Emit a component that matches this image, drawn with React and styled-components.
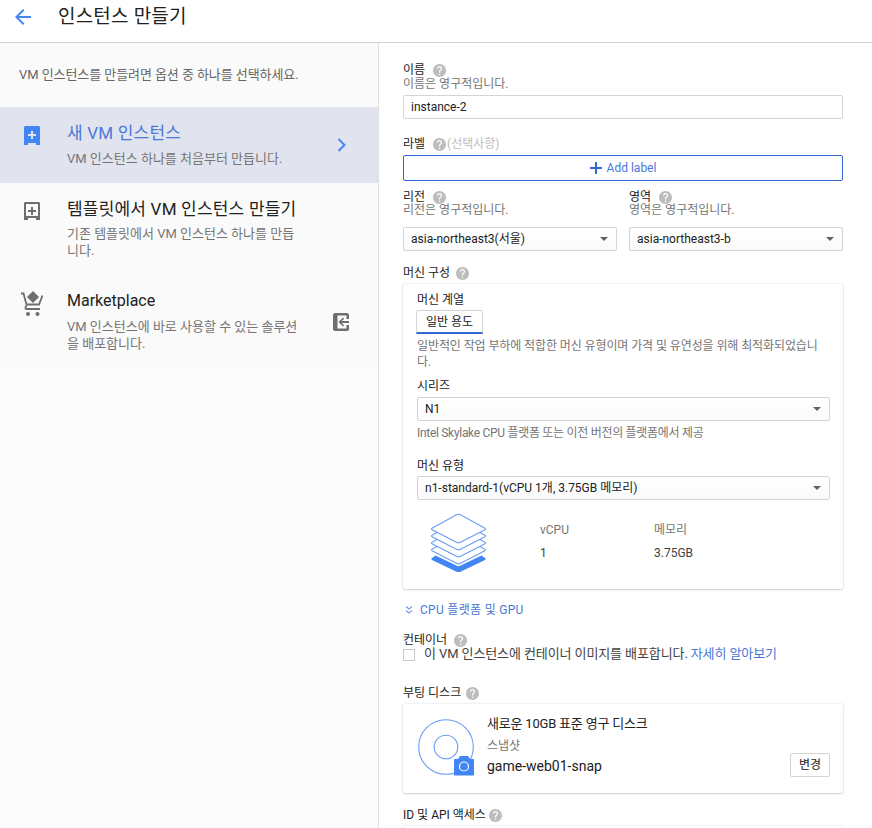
import React from 'react';
import styled, { createGlobalStyle } from 'styled-components';

const Global = createGlobalStyle`
  html, body { margin: 0; padding: 0; background: #fff; }
  body { font-family: Roboto, "Noto Sans CJK KR", sans-serif; color: #212121; height: 828px; overflow: hidden; }
  * { box-sizing: border-box; }
`;

const Page = styled.div`width: 872px; height: 828px; overflow: hidden; display: flex; flex-direction: column;`;
const Header = styled.header`flex: none; height: 43px; display: flex; align-items: center; border-bottom: 1px solid #d2d2d2; padding: 0 0 9px 11px;`;
const BackIcon = styled.svg`width: 24px; height: 24px; fill: #4285f4; margin-right: 23px;`;
const Title = styled.h1`margin: 0; font-size: 19px; letter-spacing: .2px; font-weight: 400; color: #212121; line-height: 24px;`;
const Body = styled.div`flex: 1; display: flex; min-height: 0;`;

const Side = styled.aside`flex: none; width: 379px; background: #fcfcfc; border-right: 1px solid #e0e0e0;`;
const SideInner = styled.div`background: #fafafa;`;
const Intro = styled.p`margin: 0; height: 64px; padding: 24px 0 0 19px; font-size: 13px; letter-spacing: -.07px; line-height: 16px; color: #666;`;
const Row = styled.div`
  display: grid; grid-template-columns: 67px 233px 1fr;
  padding: 16px 0 16px; background: ${p => (p.$active ? '#e1e4ee' : 'transparent')};
`;
const RowIcon = styled.div`display: flex; justify-content: center; margin-left: -4px; color: ${p => (p.$active ? '#4285f4' : '#6e6e6e')};`;
const RowText = styled.div``;
const RowTitle = styled.div`font-size: ${p => p.$size}px; letter-spacing: ${p => p.$ls}px; line-height: 20px; color: ${p => (p.$active ? '#4a78d6' : '#212121')}; white-space: nowrap; margin-bottom: ${p => p.$gap}px;`;
const RowDesc = styled.div`font-size: 13px; line-height: 17px; color: #757575;`;
const RowEnd = styled.div`display: flex; align-items: center; justify-content: center; padding-left: 5px; color: ${p => (p.$blue ? '#4285f4' : '#6e6e6e')};`;

const Main = styled.main`flex: 1; padding: 20px 29px 0 24px; min-width: 0;`;
const Label = styled.div`display: flex; align-items: center; font-size: 12px; line-height: 14px; color: #212121; margin-top: ${p => p.$mt || 0}px;`;
const Help = styled.svg`width: 13px; height: 13px; fill: #bdbdbd; margin-left: ${p => p.$ml ?? 8}px; flex: none;`;
const Optional = styled.span`color: #bdbdbd; margin-left: 1px;`;
const Hint = styled.div`font-size: 12px; line-height: 16px; color: #757575; letter-spacing: ${p => p.$ls || 0}px; margin-top: ${p => p.$mt || 0}px;`;
const Field = styled.div`
  height: 24px; border: 1px solid #d4d4d4; border-radius: 2px; background: #fff; font-size: 12px; line-height: 22px;
  padding: 0 7px; color: #212121; margin-top: ${p => p.$mt || 0}px;
`;
const Select = styled(Field)`
  display: flex; align-items: center; justify-content: space-between; padding-right: 7px;
  background: linear-gradient(#ffffff, #fafafa);
`;
const Caret = styled.span`width: 0; height: 0; border-left: 4px solid transparent; border-right: 4px solid transparent; border-top: 4px solid #616161; margin-right: 1px;`;
const AddLabel = styled.button`
  display: flex; align-items: center; justify-content: center; width: 100%; height: 26px; margin-top: 4px; padding: 0;
  border: 1px solid #3367d6; border-radius: 2px; background: #fff; color: #4a78d6; font: 12px/24px Roboto, "Noto Sans CJK KR", sans-serif;
`;
const Plus = styled.svg`width: 16px; height: 16px; fill: #3367d6; margin: 0 3px 0 -2px;`;
const Columns = styled.div`display: grid; grid-template-columns: 214px 214px; column-gap: 12px; margin-top: 9px;`;
const Card = styled.section`
  background: #fff; border-radius: 2px; box-shadow: 0 0 2px rgba(0,0,0,.18), 0 1px 2px rgba(0,0,0,.14);
  margin-top: ${p => p.$mt || 0}px; height: ${p => p.$h}px; padding: ${p => p.$p};
  ${p => p.$row ? 'display: flex;' : ''}
`;
const Chip = styled.div`
  width: 67px; height: 24px; margin: 3px 0 0 -1px; border: 1px solid #d4d4d4; border-bottom: 2px solid #3367d6; border-radius: 2px 2px 0 0;
  font-size: 12px; line-height: 22px; text-align: center; color: #212121;
`;
const Specs = styled.div`display: flex; padding-top: 13px;`;
const Stack = styled.svg`width: 60px; height: 62px; margin-left: 13px; flex: none;`;
const Spec = styled.div`width: ${p => p.$w}px; margin-left: ${p => p.$ml || 0}px; font-size: 12px; padding-top: 9px;`;
const SpecKey = styled.div`line-height: 16px; color: #757575;`;
const SpecVal = styled.div`line-height: 16px; color: #424242; margin-top: 7px;`;
const More = styled.div`display: flex; align-items: center; margin-top: 13px; height: 16px; color: #4a78d6; font-size: 12px; letter-spacing: .3px; line-height: 16px;`;
const Chevrons = styled.svg`width: 12px; height: 12px; margin-right: 5px; fill: none; stroke: #7a9be0; stroke-width: 1.2;`;
const CheckRow = styled.div`display: flex; align-items: center; font-size: 13px; letter-spacing: -.1px; line-height: 16px; color: #424242; margin-top: -1px;`;
const Box = styled.span`width: 12px; height: 12px; border: 1px solid #c8c8c8; margin-right: 9px; flex: none; margin-top: 2px;`;
const LinkText = styled.span`color: #4a78d6; margin-left: 3px;`;
const DiskText = styled.div`flex: 1;`;
const Disk = styled.svg`width: 58px; height: 58px; flex: none; margin-right: 11px; margin-top: 15px;`;
const DiskTitle = styled.div`font-size: 13px; letter-spacing: -.2px; line-height: 16px; color: #212121; margin-top: 12px;`;
const DiskSub = styled.div`font-size: 12px; line-height: 16px; color: #757575; margin-top: 6px;`;
const DiskName = styled.div`font-size: 14px; line-height: 16px; color: #212121; margin-top: 4px;`;
const DiskBottom = styled.div`display: flex; justify-content: space-between; align-items: flex-start;`;
const Change = styled.button`
  width: 40px; height: 24px; margin-top: -1px; padding: 0; border: 1px solid #d4d4d4; border-radius: 2px; background: #fff;
  color: #212121; font: 12px/22px Roboto, "Noto Sans CJK KR", sans-serif;
`;
const ExitSvg = styled.svg`width: 16px; height: 18px; margin-left: -2px;`;

const HelpIcon = ({ ml }) => (
  <Help $ml={ml} viewBox="2 2 20 20"><path d="M12 2C6.48 2 2 6.48 2 12s4.48 10 10 10 10-4.48 10-10S17.52 2 12 2zm1 17h-2v-2h2v2zm2.07-7.75l-.9.92C13.45 12.9 13 13.5 13 15h-2v-.5c0-1.1.45-2.1 1.17-2.83l1.24-1.26c.37-.36.59-.86.59-1.41 0-1.1-.9-2-2-2s-2 .9-2 2H8c0-2.21 1.79-4 4-4s4 1.79 4 4c0 .88-.36 1.68-.93 2.25z"/></Help>
);

const VmIcon = ({ filled }) => (
  <svg width="24" height="24" viewBox="0 0 24 24">
    {filled ? (
      <path fill="currentColor" d="M5.500 3h13c.8 0 1.500.7 1.500 1.500V22h-4v-2H8v2H4V4.500C4 3.700 4.700 3 5.500 3z" />
    ) : (
      <path fill="currentColor" fillRule="evenodd" d="M5.500 3h13c.8 0 1.500.7 1.500 1.500V21h-4v-2H8v2H4V4.500C4 3.700 4.700 3 5.500 3zM6 5v12h12V5z" />
    )}
    <path fill={filled ? '#e1e4ee' : 'currentColor'} d="M11 8h2v3h3v2h-3v3h-2v-3H8v-2h3z" />
  </svg>
);

const CartIcon = () => (
  <svg width="24" height="26" viewBox="0 0 24 26" fill="none">
    <path d="M1 2.500h2.500l3 11" stroke="currentColor" strokeWidth="1.800" />
    <path d="M6.500 14l-1 2.500c-.3.800.2 1.500 1 1.500H20" stroke="currentColor" strokeWidth="1.800" />
    <path d="M6.500 13.500H19L22.500 4.500" stroke="currentColor" strokeWidth="1.800" />
    <path fill="currentColor" d="M13 0l6 6-6 6-6-6z" />
    <circle cx="8" cy="23" r="2" fill="currentColor" />
    <circle cx="17.500" cy="23" r="2" fill="currentColor" />
  </svg>
);

const ExitIcon = () => (
  <ExitSvg viewBox="0 0 16 18">
    <path fill="currentColor" d="M2 0h12c1 0 2 1 2 2v4h-2.500V2.500h-9v13h9V12H16v4c0 1-1 2-2 2H2c-1 0-2-1-2-2V2C0 1 1 0 2 0z" />
    <path fill="currentColor" d="M10 4.500l1.200 1.200-2.500 2.400H16v1.800H8.700l2.500 2.400L10 13.500 5.500 9z" />
  </ExitSvg>
);

const layer = y => `M26.500 ${y + .8}L2.500 ${y + 14}q-2 1 0 2L26.500 ${y + 28.200}q2 1 4 0L54.500 ${y + 16}q2-1 0-2L30.500 ${y + .8}q-2-1-4 0z`;

const LayersIcon = () => (
  <Stack viewBox="0 0 60 62">
    <path d="M5.500 42.500L28.500 53.500L51.500 42.500L55 45q1.500 1 0 2L31 58.500q-2.500 1-5 0L2 47q-1.500-1 0-2z" fill="#4285f4" />
    {[22, 15, 8, 1].map(y => (
      <path key={y} d={layer(y)} fill="#fff" stroke="#6a9cf5" strokeWidth="1.100" />
    ))}
  </Stack>
);

const DiskIcon = () => (
  <Disk viewBox="0 0 58 58">
    <circle cx="28" cy="28" r="27.300" fill="none" stroke="#6a9cf5" strokeWidth="1.100" />
    <circle cx="28" cy="28" r="11.800" fill="none" stroke="#6a9cf5" strokeWidth="1.100" />
    <path fill="#4285f4" d="M36 41c0-.6.400-1 1-1h3l2-3h8l2 3h3c.6 0 1 .4 1 1v14.500c0 .6-.4 1-1 1H37c-.6 0-1-.4-1-1z" />
    <circle cx="46" cy="47.500" r="4.500" fill="none" stroke="#fff" strokeWidth="1.200" />
  </Disk>
);

const Options = [
  { title: '새 VM 인스턴스', desc: 'VM 인스턴스 하나를 처음부터 만듭니다.', active: true, size: 17, ls: 0.2, gap: 7 },
  { title: '템플릿에서 VM 인스턴스 만들기', desc: '기존 템플릿에서 VM 인스턴스 하나를 만듭니다.', size: 17, ls: 0.2, gap: 6 },
  { title: 'Marketplace', desc: 'VM 인스턴스에 바로 사용할 수 있는 솔루션을 배포합니다.', cart: true, exit: true, size: 16, ls: 0, gap: 7 },
];

export default function App() {
  return (
    <Page>
      <Global />
      <Header>
        <BackIcon viewBox="0 0 24 24"><path d="M20 11H7.830l5.590-5.590L12 4l-8 8 8 8 1.410-1.410L7.830 13H20v-2z" /></BackIcon>
        <Title>인스턴스 만들기</Title>
      </Header>
      <Body>
        <Side>
          <SideInner>
            <Intro>VM 인스턴스를 만들려면 옵션 중 하나를 선택하세요.</Intro>
            {Options.map(o => (
              <Row key={o.title} $active={o.active}>
                <RowIcon $active={o.active}>
                  {o.cart ? <CartIcon /> : <VmIcon filled={o.active} />}
                </RowIcon>
                <RowText>
                  <RowTitle $active={o.active} $size={o.size} $ls={o.ls} $gap={o.gap}>{o.title}</RowTitle>
                  <RowDesc>{o.desc}</RowDesc>
                </RowText>
                <RowEnd $blue={o.active}>
                  {o.active && (
                    <svg width="12" height="16" viewBox="0 0 12 16" fill="none"><path d="M2.500 2l6 6-6 6" stroke="currentColor" strokeWidth="2" /></svg>
                  )}
                  {o.exit && <ExitIcon />}
                </RowEnd>
              </Row>
            ))}
          </SideInner>
        </Side>
        <Main>
          <Label>이름 <HelpIcon /></Label>
          <Hint $mt={-1}>이름은 영구적입니다.</Hint>
          <Field $mt={3}>instance-2</Field>
          <Label $mt={18}>라벨 <HelpIcon /><Optional>(선택사항)</Optional></Label>
          <AddLabel><Plus viewBox="0 0 16 16"><path d="M7 2h2v5h5v2H9v5H7V9H2V7h5z" /></Plus>Add label</AddLabel>
          <Columns>
            <div>
              <Label>리전 <HelpIcon /></Label>
              <Hint $mt={-2}>리전은 영구적입니다.</Hint>
              <Select $mt={9}>asia-northeast3(서울)<Caret /></Select>
            </div>
            <div>
              <Label>영역 <HelpIcon /></Label>
              <Hint $mt={-2}>영역은 영구적입니다.</Hint>
              <Select $mt={9}>asia-northeast3-b<Caret /></Select>
            </div>
          </Columns>
          <Label $mt={15}>머신 구성 <HelpIcon ml={6} /></Label>
          <Card $mt={4} $h={305} $p="9px 13px 0 14px">
            <Label>머신 계열</Label>
            <Chip>일반 용도</Chip>
            <Hint $mt={4} $ls={-0.1}>일반적인 작업 부하에 적합한 머신 유형이며 가격 및 유연성을 위해 최적화되었습니다.</Hint>
            <Label $mt={9}>시리즈</Label>
            <Select $mt={4}>N1<Caret /></Select>
            <Hint $mt={4} $ls={-0.3}>Intel Skylake CPU 플랫폼 또는 이전 버전의 플랫폼에서 제공</Hint>
            <Label $mt={18}>머신 유형</Label>
            <Select $mt={3}>n1-standard-1(vCPU 1개, 3.75GB 메모리)<Caret /></Select>
            <Specs>
              <LayersIcon />
              <Spec $w={114} $ml={50}><SpecKey>vCPU</SpecKey><SpecVal>1</SpecVal></Spec>
              <Spec $w={100}><SpecKey>메모리</SpecKey><SpecVal>3.75GB</SpecVal></Spec>
            </Specs>
          </Card>
          <More>
            <Chevrons viewBox="0 0 12 12"><path d="M3 2.500l3 2.500 3-2.500M3 6.500l3 2.500 3-2.500" /></Chevrons>
            CPU 플랫폼 및 GPU
          </More>
          <Label $mt={15}>컨테이너 <HelpIcon ml={7} /></Label>
          <CheckRow>
            <Box />이 VM 인스턴스에 컨테이너 이미지를 배포합니다.<LinkText>자세히 알아보기</LinkText>
          </CheckRow>
          <Label $mt={24}>부팅 디스크 <HelpIcon ml={5} /></Label>
          <Card $mt={4} $h={89} $row $p="0 13px 0 15px">
            <DiskIcon />
            <DiskText>
              <DiskTitle>새로운 10GB 표준 영구 디스크</DiskTitle>
              <DiskSub>스냅샷</DiskSub>
              <DiskBottom>
                <DiskName>game-web01-snap</DiskName>
                <Change>변경</Change>
              </DiskBottom>
            </DiskText>
          </Card>
          <Label $mt={15}>ID 및 API 액세스 <HelpIcon ml={3} /></Label>
          <Card $mt={4} $h={40} />
        </Main>
      </Body>
    </Page>
  );
}
